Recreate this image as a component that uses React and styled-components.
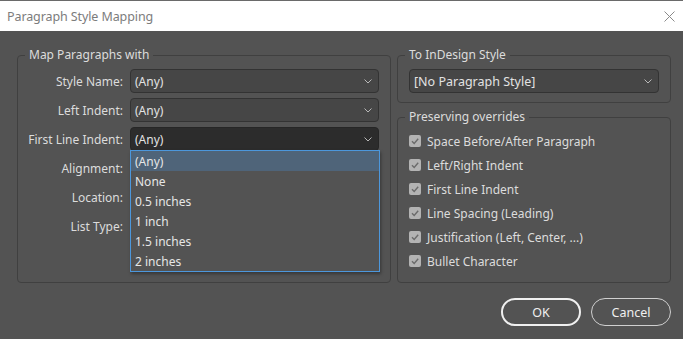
import React from "react";
import styled, { createGlobalStyle } from "styled-components";

const GlobalStyle = createGlobalStyle`
  html, body {
    margin: 0;
    padding: 0;
    background: #535353;
  }
  body {
    font-family: "Noto Sans", "Open Sans", sans-serif;
    font-size: 12px;
    color: #dcdcdc;
  }
`;

const leftRows = ["Style Name:", "Left Indent:", "First Line Indent:", "Alignment:", "Location:", "List Type:"];
const listItems = ["(Any)", "None", "0.5 inches", "1 inch", "1.5 inches", "2 inches"];
const overrides = [
  "Space Before/After Paragraph",
  "Left/Right Indent",
  "First Line Indent",
  "Line Spacing (Leading)",
  "Justification (Left, Center, ...)",
  "Bullet Character",
];

const Chevron = () => (
  <svg width="8" height="5" viewBox="0 0 8 5">
    <polyline points="0.5,0.5 4,4 7.5,0.5" fill="none" stroke="#b8b8b8" strokeWidth="1" />
  </svg>
);

const Check = () => (
  <svg width="12" height="12" viewBox="0 0 12 12">
    <polyline points="3,6.2 5.2,8.4 9.2,3.8" fill="none" stroke="#6b6b6b" strokeWidth="1.4" />
  </svg>
);

const App = () => {
  return (
    <Window>
      <GlobalStyle />
      <TitleBar>
        <Title>Paragraph Style Mapping</Title>
        <Close>
          <svg width="11" height="11" viewBox="0 0 11 11">
            <path d="M0.5 0.5 L10.5 10.5 M10.5 0.5 L0.5 10.5" stroke="#8a8a8a" strokeWidth="1" />
          </svg>
        </Close>
      </TitleBar>
      <Body>
        <Columns>
          <Group $grow>
            <Legend>Map Paragraphs with</Legend>
            <FieldGrid>
              {leftRows.map((label, i) => (
                <React.Fragment key={label}>
                  <Label>{label}</Label>
                  {i < 3 ? (
                    <SelectWrap>
                      <Select $focused={i === 2}>
                        <span>(Any)</span>
                        <Chevron />
                      </Select>
                      {i === 2 && (
                        <Popup>
                          {listItems.map((item, j) => (
                            <PopupItem key={item} $active={j === 0}>
                              {item}
                            </PopupItem>
                          ))}
                        </Popup>
                      )}
                    </SelectWrap>
                  ) : (
                    <Spacer />
                  )}
                </React.Fragment>
              ))}
            </FieldGrid>
          </Group>
          <RightCol>
            <Group>
              <Legend>To InDesign Style</Legend>
              <StyleSelect>
                <span>[No Paragraph Style]</span>
                <Chevron />
              </StyleSelect>
            </Group>
            <Group $fill>
              <Legend>Preserving overrides</Legend>
              <CheckList>
                {overrides.map((o) => (
                  <CheckRow key={o}>
                    <Box>
                      <Check />
                    </Box>
                    {o}
                  </CheckRow>
                ))}
              </CheckList>
            </Group>
          </RightCol>
        </Columns>
        <Footer>
          <Button $primary>OK</Button>
          <Button>Cancel</Button>
        </Footer>
      </Body>
    </Window>
  );
};

export default App;

const Window = styled.div`
  width: 683px;
  height: 339px;
  display: flex;
  flex-direction: column;
  background: #535353;
  overflow: hidden;
`;
const TitleBar = styled.div`
  height: 30px;
  background: #ffffff;
  border-top: 1px solid #6a6a6a;
  display: flex;
  align-items: center;
  justify-content: space-between;
  padding: 0 7px 0 7px;
`;
const Title = styled.div`
  font-size: 12.5px;
  color: #7c7c7c;
  letter-spacing: -0.1px;
`;
const Close = styled.div`
  display: flex;
  padding-right: 1px;
`;
const Body = styled.div`
  flex: 1;
  display: flex;
  flex-direction: column;
  padding: 16px 12px 0 17px;
`;
const Columns = styled.div`
  display: flex;
  gap: 6px;
  height: 236px;
`;
const Group = styled.fieldset`
  margin: 0;
  border: 1px solid #404040;
  border-radius: 4px;
  padding: 0 11px 9px 11px;
  min-width: 0;
  box-sizing: border-box;
  width: ${(p) => (p.$grow ? "374px" : "auto")};
  flex: ${(p) => (p.$fill ? "1" : "none")};
  position: relative;
`;
const Legend = styled.legend`
  padding: 0 4px 0 4px;
  margin-left: -4px;
  line-height: 16px;
  font-size: 12px;
  color: #dcdcdc;
`;
const FieldGrid = styled.div`
  display: grid;
  grid-template-columns: 105px 249px;
  column-gap: 7px;
  row-gap: 5px;
  margin-left: -11px;
  padding-top: 6px;
  grid-auto-rows: 24px;
`;
const Label = styled.div`
  display: flex;
  align-items: center;
  justify-content: flex-end;
  white-space: nowrap;
`;
const Spacer = styled.div``;
const SelectWrap = styled.div`
  position: relative;
`;
const Select = styled.div`
  height: 24px;
  box-sizing: border-box;
  background: ${(p) => (p.$focused ? "#2c2c2c" : "#464646")};
  border: 1px solid ${(p) => (p.$focused ? "#262626" : "#333333")};
  border-radius: 4px;
  display: flex;
  align-items: center;
  justify-content: space-between;
  padding: 0 6px 0 4px;
  color: #e2e2e2;
`;
const StyleSelect = styled(Select)`
  margin-top: 6px;
  width: 250px;
  font-size: 12.5px;
`;
const Popup = styled.div`
  position: absolute;
  left: 0;
  top: 23px;
  width: 250px;
  box-sizing: border-box;
  background: #535353;
  border: 1px solid #4c97dc;
  padding: 0;
  box-shadow: 1px 2px 3px rgba(0, 0, 0, 0.35);
  z-index: 5;
`;
const PopupItem = styled.div`
  height: 20px;
  display: flex;
  align-items: center;
  padding-left: 4px;
  background: ${(p) => (p.$active ? "#4f6479" : "transparent")};
  color: #e6e6e6;
`;
const RightCol = styled.div`
  display: flex;
  flex-direction: column;
  gap: 6px;
  width: 274px;
`;
const CheckList = styled.div`
  display: flex;
  flex-direction: column;
  padding-top: 4px;
`;
const CheckRow = styled.div`
  height: 24px;
  display: flex;
  align-items: center;
  gap: 6px;
  white-space: nowrap;
`;
const Box = styled.div`
  width: 12px;
  height: 12px;
  border-radius: 2px;
  background: #b3b3b3;
  display: flex;
`;
const Footer = styled.div`
  display: flex;
  justify-content: flex-end;
  gap: 10px;
  padding-top: 15px;
`;
const Button = styled.button`
  width: 80px;
  height: 28px;
  border-radius: 14px;
  background: transparent;
  border: ${(p) => (p.$primary ? "2px solid #f0f0f0" : "1px solid #d0d0d0")};
  color: #f0f0f0;
  font-family: "Noto Sans", "Open Sans", sans-serif;
  font-size: 12.5px;
  padding: 0;
`;
